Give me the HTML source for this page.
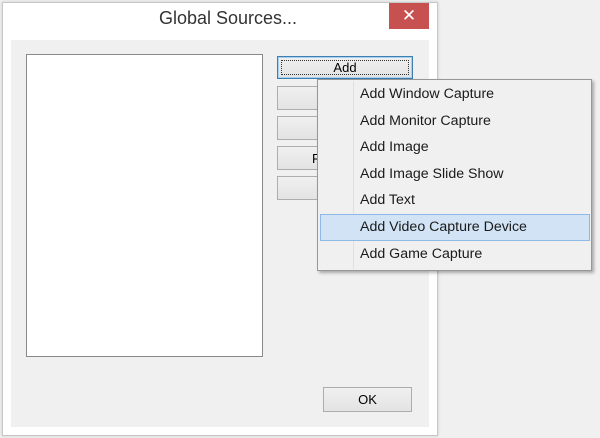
<!DOCTYPE html>
<html><head><style>
body{margin:0;width:600px;height:438px;background:#f0f0f0;position:relative;overflow:hidden;font-family:"Liberation Sans",sans-serif}
.a{position:absolute;box-sizing:border-box}
.btn{background:linear-gradient(#f0f0f0,#e3e3e3);border:1px solid #adadad}
.mi{position:absolute;left:360px;font-size:14.2px;color:#1a1a1a}
</style></head><body>
<div class="a" style="left:2px;top:2px;width:436px;height:434px;background:#fff;border:1px solid #c8c8c8;box-shadow:0 0 3px rgba(0,0,0,.15)"></div>
<div class="a" style="left:8px;top:8px;width:440px;text-align:center;font-size:18px;color:#333">Global Sources...</div>
<div class="a" style="left:389px;top:3px;width:40px;height:26px;background:#c75050;color:#fff;font-size:17px;text-align:center;line-height:25px">✕</div>
<div class="a" style="left:11px;top:40px;width:418px;height:387px;background:#f0f0f0"></div>
<div class="a" style="left:26px;top:54px;width:237px;height:303px;background:#fff;border:1px solid #8a8a8a"></div>
<div class="a btn" style="left:277px;top:56px;width:136px;height:23px;border:1px solid #3c7fb1;box-shadow:inset 0 0 0 1px #aad0f0"><div class="a" style="left:3px;top:3px;right:3px;bottom:3px;border:1px dotted #333;text-align:center;font-size:13px;line-height:14px">Add</div></div>
<div class="a btn" style="left:277px;top:86px;width:136px;height:24px"></div>
<div class="a btn" style="left:277px;top:116px;width:136px;height:24px"></div>
<div class="a btn" style="left:277px;top:146px;width:136px;height:24px"><span style="position:absolute;left:34px;top:4px;font-size:13px">F</span></div>
<div class="a btn" style="left:277px;top:176px;width:136px;height:24px"></div>
<div class="a btn" style="left:323px;top:387px;width:89px;height:25px;text-align:center;font-size:13px;line-height:23px">OK</div>
<div class="a" style="left:317px;top:79px;width:275px;height:192px;background:#f0f0f0;border:1px solid #979797;box-shadow:2px 2px 3px rgba(0,0,0,.3)"></div>
<div class="a" style="left:353px;top:81px;width:1px;height:188px;background:#e0e0e0"></div>
<div class="a" style="left:320px;top:214px;width:270px;height:27px;background:#d1e3f5;border:1px solid #8fb9e6"></div>
<div class="mi" style="top:86px">Add Window Capture</div>
<div class="mi" style="top:113px">Add Monitor Capture</div>
<div class="mi" style="top:139px">Add Image</div>
<div class="mi" style="top:166px">Add Image Slide Show</div>
<div class="mi" style="top:192px">Add Text</div>
<div class="mi" style="top:219px">Add Video Capture Device</div>
<div class="mi" style="top:246px">Add Game Capture</div>
</body></html>
